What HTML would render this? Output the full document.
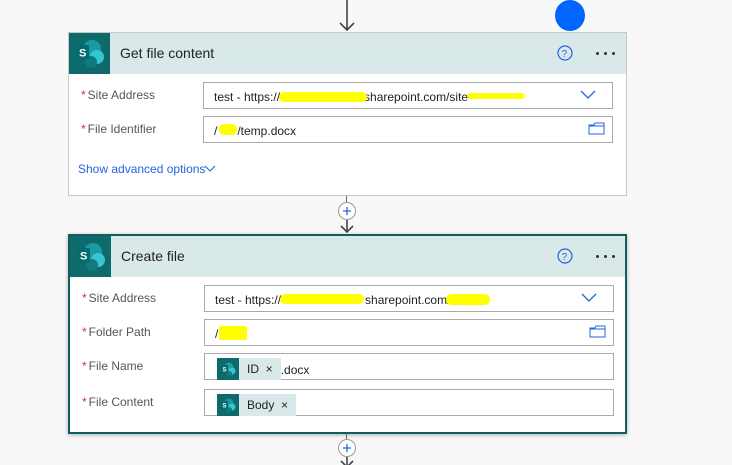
<!DOCTYPE html>
<html><head><style>
*{box-sizing:border-box;margin:0;padding:0}
body{width:732px;height:465px;background:#f8f8f8;font-family:"Liberation Sans",sans-serif;position:relative;overflow:hidden}
.abs{position:absolute}
.card{position:absolute;left:68px;width:559px;background:#fff;border:1px solid #c8c8c8}
.hdr{position:absolute;left:0;top:0;right:0;height:41px;background:#d9e9e9}
.ico{position:absolute;left:0;top:0;width:41px;height:41px;background:#0f6b6b}
.title{position:absolute;left:51px;top:12px;font-size:14px;color:#222}
.lbl{position:absolute;left:12px;font-size:12px;color:#555}
.lbl b{color:#d13438;font-weight:normal;margin-right:2px}
.inp{position:absolute;left:134px;width:410px;height:27px;border:1px solid #aaa;background:#fff;font-size:12px;color:#222;padding:7px 0 0 10px;white-space:nowrap}
.yl{position:absolute;background:#ffff00;border-radius:5px}
.tok{display:inline-block;vertical-align:middle;background:#d9e9e9;height:22px;font-size:12px;color:#222;padding-right:8px;margin-top:-4px}
.tok svg{display:inline-block;vertical-align:top;margin-right:8px}
.tok span{line-height:22px}
.dots{position:absolute;top:19px;width:3px;height:3px;border-radius:50%;background:#333}
</style></head><body>
<svg class="abs" style="left:338px;top:0" width="18" height="32"><path d="M9 0V30M2 23L9 30L16 23" stroke="#444" stroke-width="1.6" fill="none"/></svg>
<div class="abs" style="left:555px;top:0;width:30px;height:31px;border-radius:50%;background:#0066ff"></div>

<div class="card" style="top:32px;height:164px">
 <div class="hdr"><div class="ico"><svg width="41" height="41"><circle cx="23" cy="16" r="9" fill="#1a9ba1"/><circle cx="28" cy="24" r="7" fill="#37c6d0"/><circle cx="22" cy="29" r="6" fill="#0f7b7f"/><rect x="7" y="12" width="13" height="14" rx="1.5" fill="#036c70"/><text x="10" y="23.5" font-size="11" fill="#fff" font-family="Liberation Sans" font-weight="bold">S</text></svg></div>
 <div class="title">Get file content</div>
 <svg class="abs" style="left:488px;top:12px" width="16" height="16"><circle cx="8" cy="8" r="7" fill="none" stroke="#2266dd" stroke-width="1.2"/><text x="4.5" y="12" font-size="10" fill="#2266dd" font-family="Liberation Sans">?</text></svg>
 <div class="dots" style="left:527px"></div><div class="dots" style="left:535px"></div><div class="dots" style="left:543px"></div>
 </div>
 <div class="lbl" style="top:55px"><b>*</b>Site Address</div>
 <div class="inp" style="top:49px">test - https://<span style="display:inline-block;width:84px"></span>sharepoint.com/site</div>
 <div class="yl" style="left:210px;top:59px;width:88px;height:10px"></div>
 <div class="yl" style="left:398px;top:60px;width:58px;height:6px"></div>
 <svg class="abs" style="left:511px;top:57px" width="16" height="10"><path d="M1 1L8 8L15 1" stroke="#2266dd" stroke-width="1.3" fill="none"/></svg>
 <div class="lbl" style="top:89px"><b>*</b>File Identifier</div>
 <div class="inp" style="top:83px">/<span style="display:inline-block;width:20px"></span>/temp.docx</div>
 <div class="yl" style="left:150px;top:91px;width:18px;height:11px"></div>
 <svg class="abs" style="left:519px;top:89px" width="17" height="13"><path d="M1 3H6L7 1H16V12H1Z M1 4H16" stroke="#2266dd" stroke-width="1" fill="none"/></svg>
 <div class="abs" style="left:9px;top:129px;font-size:12px;color:#2266dd">Show advanced options</div>
 <svg class="abs" style="left:135px;top:132px" width="12" height="8"><path d="M1 1L6 6L11 1" stroke="#2266dd" stroke-width="1.1" fill="none"/></svg>
</div>

<div class="abs" style="left:346px;top:196px;width:1px;height:6px;background:#666"></div>
<svg class="abs" style="left:337px;top:201px" width="20" height="32"><circle cx="10" cy="10" r="8.5" fill="#fff" stroke="#999"/><path d="M10 6V14M6 10H14" stroke="#2266dd" stroke-width="1.3"/><path d="M10 19V31M4 25L10 31L16 25" stroke="#444" stroke-width="1.6" fill="none"/></svg>

<div class="card" style="top:234px;height:200px;border:2px solid #0f5f5f;box-shadow:0 1px 4px rgba(0,0,0,.3)">
 <div class="hdr"><div class="ico"><svg width="41" height="41"><circle cx="23" cy="16" r="9" fill="#1a9ba1"/><circle cx="28" cy="24" r="7" fill="#37c6d0"/><circle cx="22" cy="29" r="6" fill="#0f7b7f"/><rect x="7" y="12" width="13" height="14" rx="1.5" fill="#036c70"/><text x="10" y="23.5" font-size="11" fill="#fff" font-family="Liberation Sans" font-weight="bold">S</text></svg></div>
 <div class="title">Create file</div>
 <svg class="abs" style="left:487px;top:12px" width="16" height="16"><circle cx="8" cy="8" r="7" fill="none" stroke="#2266dd" stroke-width="1.2"/><text x="4.5" y="12" font-size="10" fill="#2266dd" font-family="Liberation Sans">?</text></svg>
 <div class="dots" style="left:526px"></div><div class="dots" style="left:534px"></div><div class="dots" style="left:542px"></div>
 </div>
 <div class="lbl" style="top:55px"><b>*</b>Site Address</div>
 <div class="inp" style="top:49px">test - https://<span style="display:inline-block;width:84px"></span>sharepoint.com/s</div>
 <div class="yl" style="left:210px;top:58px;width:84px;height:10px"></div>
 <div class="yl" style="left:376px;top:58px;width:44px;height:11px"></div>
 <svg class="abs" style="left:511px;top:57px" width="16" height="10"><path d="M1 1L8 8L15 1" stroke="#2266dd" stroke-width="1.3" fill="none"/></svg>
 <div class="lbl" style="top:89px"><b>*</b>Folder Path</div>
 <div class="inp" style="top:83px">/</div>
 <div class="yl" style="left:149px;top:90px;width:28px;height:14px;border-radius:2px"></div>
 <svg class="abs" style="left:519px;top:89px" width="17" height="13"><path d="M1 3H6L7 1H16V12H1Z M1 4H16" stroke="#2266dd" stroke-width="1" fill="none"/></svg>
 <div class="lbl" style="top:123px"><b>*</b>File Name</div>
 <div class="inp" style="top:117px;padding:8px 0 0 12px"><span class="tok"><svg width="22" height="22"><rect width="22" height="22" fill="#0f6b6b"/><circle cx="12" cy="9" r="4.5" fill="#1a9ba1"/><circle cx="15" cy="13" r="3.5" fill="#37c6d0"/><circle cx="12" cy="16" r="3" fill="#0f7b7f"/><rect x="4" y="7" width="7" height="8" fill="#036c70"/><text x="5.5" y="13.5" font-size="6" fill="#fff" font-family="Liberation Sans" font-weight="bold">S</text></svg><span>ID&nbsp;&nbsp;×</span></span>.docx</div>
 <div class="lbl" style="top:159px"><b>*</b>File Content</div>
 <div class="inp" style="top:153px;padding:8px 0 0 12px"><span class="tok"><svg width="22" height="22"><rect width="22" height="22" fill="#0f6b6b"/><circle cx="12" cy="9" r="4.5" fill="#1a9ba1"/><circle cx="15" cy="13" r="3.5" fill="#37c6d0"/><circle cx="12" cy="16" r="3" fill="#0f7b7f"/><rect x="4" y="7" width="7" height="8" fill="#036c70"/><text x="5.5" y="13.5" font-size="6" fill="#fff" font-family="Liberation Sans" font-weight="bold">S</text></svg><span>Body&nbsp;&nbsp;×</span></span></div>
</div>

<div class="abs" style="left:346px;top:434px;width:1px;height:6px;background:#666"></div>
<svg class="abs" style="left:337px;top:438px" width="20" height="27"><circle cx="10" cy="10" r="8.5" fill="#fff" stroke="#999"/><path d="M10 6V14M6 10H14" stroke="#2266dd" stroke-width="1.3"/><path d="M10 19V27M4 23L10 29L16 23" stroke="#444" stroke-width="1.6" fill="none"/></svg>
</body></html>
